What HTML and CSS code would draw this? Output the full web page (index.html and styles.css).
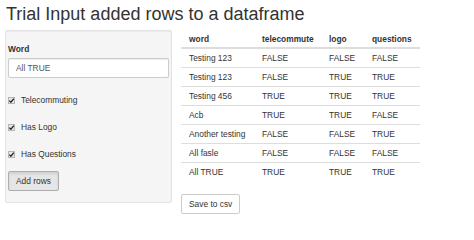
FILE: index.html
```html
<!DOCTYPE html>
<html>
<head>
<meta charset="utf-8">
<link rel="stylesheet" href="styles.css">
</head>
<body>
<div class="page">
  <h2 class="title">Trial Input added rows to a dataframe</h2>
  <div class="layout">
    <div class="well">
      <label class="field-label" for="word">Word</label>
      <input class="text-input" id="word" type="text" value="All TRUE">
      <div class="check first"><span class="box"><svg viewBox="0 0 7 7" width="7" height="7"><path d="M1.3 3.6 L2.9 5.2 L5.8 1.6" fill="none" stroke="#222" stroke-width="1.3"/></svg></span><span>Telecommuting</span></div>
      <div class="check"><span class="box"><svg viewBox="0 0 7 7" width="7" height="7"><path d="M1.3 3.6 L2.9 5.2 L5.8 1.6" fill="none" stroke="#222" stroke-width="1.3"/></svg></span><span>Has Logo</span></div>
      <div class="check"><span class="box"><svg viewBox="0 0 7 7" width="7" height="7"><path d="M1.3 3.6 L2.9 5.2 L5.8 1.6" fill="none" stroke="#222" stroke-width="1.3"/></svg></span><span>Has Questions</span></div>
      <button class="btn btn-active">Add rows</button>
    </div>
    <div class="main">
      <table class="data">
        <colgroup><col class="c1"><col class="c2"><col class="c3"><col class="c4"></colgroup>
        <thead>
          <tr><th>word</th><th>telecommute</th><th>logo</th><th>questions</th></tr>
        </thead>
        <tbody>
          <tr><td>Testing 123</td><td>FALSE</td><td>FALSE</td><td>FALSE</td></tr>
          <tr><td>Testing 123</td><td>FALSE</td><td>TRUE</td><td>TRUE</td></tr>
          <tr><td>Testing 456</td><td>TRUE</td><td>TRUE</td><td>TRUE</td></tr>
          <tr><td>Acb</td><td>TRUE</td><td>TRUE</td><td>FALSE</td></tr>
          <tr><td>Another testing</td><td>FALSE</td><td>FALSE</td><td>TRUE</td></tr>
          <tr><td>All fasle</td><td>FALSE</td><td>FALSE</td><td>FALSE</td></tr>
          <tr class="last"><td>All TRUE</td><td>TRUE</td><td>TRUE</td><td>TRUE</td></tr>
        </tbody>
      </table>
      <button class="btn">Save to csv</button>
    </div>
  </div>
</div>
</body>
</html>
```

FILE: styles.css
```css
html, body {
  margin: 0;
  padding: 0;
  background: #fff;
}
body {
  font-family: "Liberation Sans", Arial, sans-serif;
  font-size: 8.4px;
  line-height: 12px;
  color: #333;
}
.page {
  padding: 0 5px;
}
.title {
  margin: 4px 0 6px 1px;
  font-size: 18px;
  line-height: 20px;
  font-weight: normal;
  color: #333;
}
.layout {
  display: flex;
  align-items: flex-start;
  gap: 9px;
}
.well {
  box-sizing: border-box;
  width: 167px;
  padding: 12px 2px 11px 2px;
  background: #f5f5f5;
  border: 1px solid #e3e3e3;
  border-radius: 2px;
  box-shadow: inset 0 1px 1px rgba(0,0,0,0.05);
  display: flex;
  flex-direction: column;
  align-items: flex-start;
}
.field-label {
  display: block;
  font-weight: bold;
  margin-bottom: 3px;
}
.text-input {
  box-sizing: border-box;
  width: 100%;
  height: 20px;
  margin: 0;
  padding: 0 7px;
  font-family: inherit;
  font-size: 8.4px;
  color: #555;
  background: #fff;
  border: 1px solid #ccc;
  border-radius: 2px;
  box-shadow: inset 0 1px 1px rgba(0,0,0,0.075);
  outline: none;
}
.check {
  display: flex;
  align-items: center;
  height: 12px;
  margin-top: 15px;
  gap: 6px;
}
.check.first {
  margin-top: 16px;
}
.box {
  box-sizing: border-box;
  width: 7px;
  height: 7px;
  background: #e8e8e8;
  border: 1px solid #b5b5b5;
  display: flex;
  align-items: center;
  justify-content: center;
  overflow: hidden;
}
.box svg {
  display: block;
  flex: none;
}
.btn {
  box-sizing: border-box;
  height: 20px;
  padding: 0 7px;
  margin: 0;
  font-family: inherit;
  font-size: 8.4px;
  color: #333;
  background: #fff;
  border: 1px solid #ccc;
  border-radius: 2px;
  cursor: pointer;
}
.btn-active {
  margin-top: 11px;
  background: #e6e6e6;
  border-color: #adadad;
  box-shadow: inset 0 2px 3px rgba(0,0,0,0.1);
}
.main {
  display: flex;
  flex-direction: column;
  align-items: flex-start;
}
.data {
  width: 239px;
  border-collapse: separate;
  border-spacing: 0;
  table-layout: fixed;
  margin-bottom: 13px;
}
.c1 { width: 73px; }
.c2 { width: 67px; }
.c3 { width: 43px; }
.c4 { width: 56px; }
.data th, .data td {
  padding: 0 0 0 8px;
  text-align: left;
  white-space: nowrap;
  overflow: hidden;
}
.data th {
  height: 17px;
  font-weight: bold;
  border-bottom: 2px solid #ddd;
}
.data td {
  height: 18px;
  border-bottom: 1px solid #ddd;
}
.data tr.last td {
  border-bottom: none;
}
```
